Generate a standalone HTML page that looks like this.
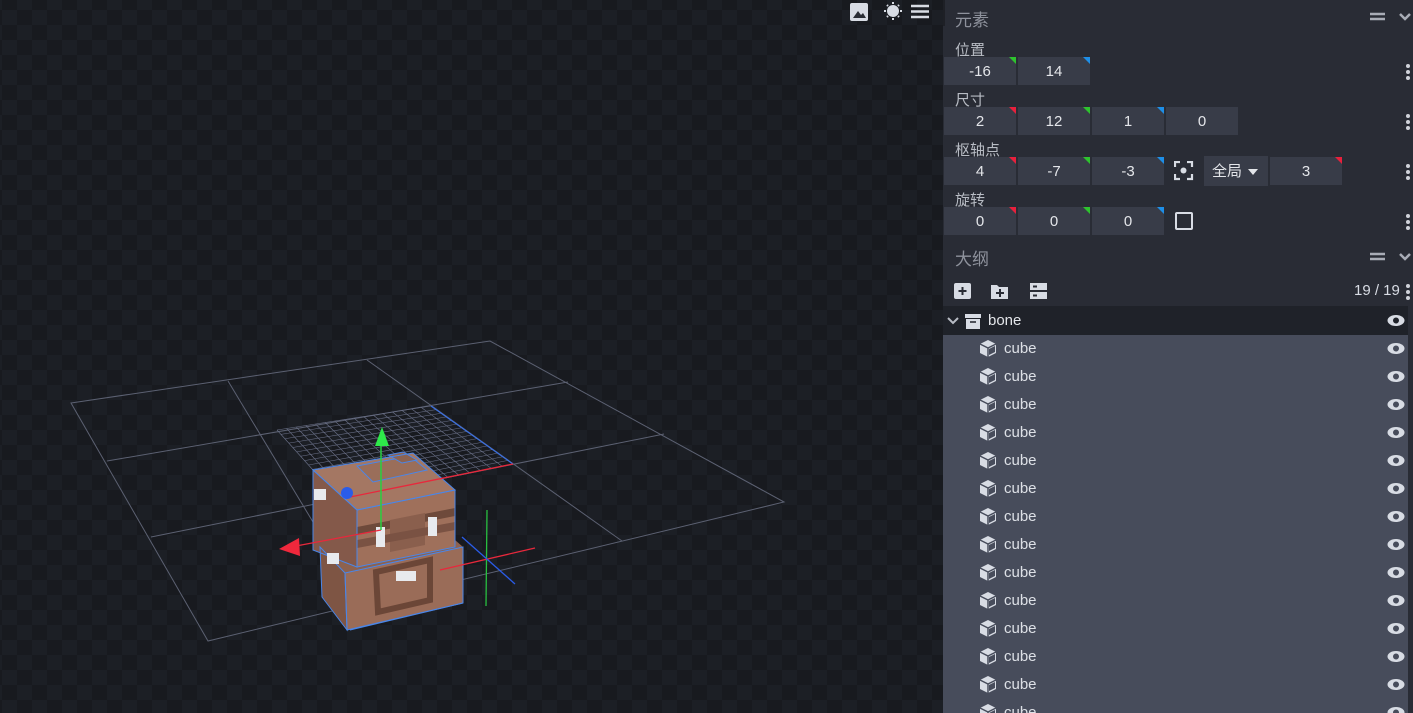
<!DOCTYPE html>
<html><head><meta charset="utf-8"><style>
*{margin:0;padding:0;box-sizing:border-box}
body{width:1413px;height:713px;overflow:hidden;background:#1b1d22;font-family:"Liberation Sans","Noto Sans CJK SC",sans-serif;position:relative}
#vp{position:absolute;left:0;top:0;width:943px;height:713px;
background-color:#181a1f;
background-image:linear-gradient(45deg,#1c1f25 25%,transparent 25%,transparent 75%,#1c1f25 75%),linear-gradient(45deg,#1c1f25 25%,transparent 25%,transparent 75%,#1c1f25 75%);
background-size:30px 30px;background-position:2px -5px,17px 10px}
#panel{position:absolute;left:943px;top:0;width:470px;height:713px;background:#292c35;color:#d0d3da;overflow:hidden}
.t{position:absolute;font-size:15px}
.h{position:absolute;left:12px;font-size:17px;color:#8e929c}
.lbl{position:absolute;left:12px;font-size:15px;color:#b8bcc4}
.f{position:absolute;height:28px;width:72px;background:#383c48;color:#e4e6ea;font-size:15px;text-align:center;line-height:30px}
.f.r::after,.f.g::after,.f.b::after{content:"";position:absolute;right:0;top:0;border-top:7px solid;border-left:7px solid transparent}
.f.r::after{border-top-color:#e8203c}.f.g::after{border-top-color:#2ec32e}.f.b::after{border-top-color:#1e8fe8}
.dots{position:absolute;right:3px;width:4px}
.dots i{display:block;width:4px;height:4px;border-radius:2px;background:#d0d3da;margin-bottom:2px}
.row{position:absolute;left:0;width:465px;height:28px;background:#474c5b;font-size:15px;color:#dde0e6}
.row span{position:absolute;left:61px;top:5px}
.row svg{position:absolute}
</style></head><body>
<div id="vp">
<svg width="943" height="713" style="position:absolute;left:0;top:0">
<g stroke="#5c6172" stroke-width="1" fill="none">
<polygon points="71,403 490,341 784,502 208,641"/>
<line x1="228" y1="381" x2="363" y2="605"/>
<line x1="367" y1="360" x2="622" y2="541"/>
<line x1="107" y1="461" x2="568" y2="382"/>
<line x1="151" y1="537" x2="664" y2="434"/>
</g>
<g stroke="#6a7088" stroke-width="0.6" fill="none" id="fg"></g>
<line x1="431" y1="406" x2="513" y2="464" stroke="#3a6fe0" stroke-width="1.2"/>
<polygon points="320,547 345,573 347,630 322,597" fill="#7e5544"/>
<polygon points="345,573 463,547 463,603 347,630" fill="#9a6c58"/>
<polygon points="376,572 430,560 430,600 378,612" fill="none" stroke="#6b4637" stroke-width="6"/>
<polygon points="320,547 438,525 463,547 345,573" fill="#8d624f"/>
<polygon points="313,470 357,510 357,567 313,550" fill="#84594a"/>
<polygon points="357,510 455,490 455,547 357,567" fill="#9f705b"/>
<polygon points="313,470 413,453 455,490 357,510" fill="#a47763"/>
<polygon points="357,527 455,508 455,516 357,535" fill="#6e4a3b"/>
<polygon points="390,520 425,513 425,545 390,552" fill="#8a5f4d"/>
<polygon points="357,540 455,522 455,530 357,548" fill="#7a5243"/>
<polygon points="357,466 410,456 427,470 373,482" fill="#9a6e5a" stroke="#4a86e8" stroke-width="1"/>
<polygon points="388,455 403,452 417,460 402,463" fill="#8c6351" stroke="#4a86e8" stroke-width="1"/>
<g fill="none" stroke="#4a86e8" stroke-width="1">
<polygon points="313,470 413,453 455,490 357,510"/>
<polygon points="357,510 455,490 455,547 357,567"/>
<polygon points="313,470 357,510 357,567 313,550"/>
<polygon points="320,547 345,573 347,630 322,597"/>
<polygon points="345,573 463,547 463,603 347,630"/>
<line x1="350" y1="630" x2="463" y2="603"/>
</g>
<rect x="376" y="527" width="9" height="20" fill="#e8eaee"/>
<rect x="428" y="517" width="9" height="19" fill="#e8eaee"/>
<rect x="396" y="571" width="20" height="10" fill="#e8eaee"/>
<rect x="314" y="489" width="12" height="11" fill="#e8eaee"/>
<rect x="327" y="553" width="12" height="11" fill="#e8eaee"/>
<line x1="350" y1="497" x2="513" y2="464" stroke="#e8283c" stroke-width="1.3"/>
<line x1="381" y1="530" x2="296" y2="546" stroke="#e8283c" stroke-width="1.3"/>
<polygon points="279,549 299,538 300,556" fill="#f0283c"/>
<line x1="381" y1="530" x2="381" y2="445" stroke="#28d040" stroke-width="1.5"/>
<polygon points="382,427 375,446 389,446" fill="#2ee84a"/>
<circle cx="347" cy="493" r="6" fill="#2a5ce8"/>
<line x1="487" y1="510" x2="486" y2="606" stroke="#28c040" stroke-width="1.3"/>
<line x1="440" y1="570" x2="535" y2="548" stroke="#e8283c" stroke-width="1.3"/>
<line x1="462" y1="537" x2="515" y2="584" stroke="#2a5ce8" stroke-width="1.3"/>
</svg>
<svg width="90" height="24" style="position:absolute;left:848px;top:2px">
<rect x="2" y="1" width="18" height="18" rx="2" fill="#d8dce4"/>
<polygon points="5,16 10,9 13,13 15,11 18,16" fill="#2a2d35"/>
<circle cx="45" cy="9" r="6" fill="#d8dce4"/>
<g stroke="#d8dce4" stroke-width="2"><line x1="45" y1="0" x2="45" y2="2"/><line x1="45" y1="16" x2="45" y2="18"/><line x1="36" y1="9" x2="38" y2="9"/><line x1="52" y1="9" x2="54" y2="9"/><line x1="39" y1="3" x2="40" y2="4"/><line x1="50" y1="14" x2="51" y2="15"/><line x1="51" y1="3" x2="50" y2="4"/><line x1="39" y1="15" x2="40" y2="14"/>
<line x1="63" y1="4" x2="81" y2="4" stroke-width="2.5"/><line x1="63" y1="9.5" x2="81" y2="9.5" stroke-width="2.5"/><line x1="63" y1="15" x2="81" y2="15" stroke-width="2.5"/></g>
</svg>
</div>
<div id="panel">
<div style="position:absolute;left:0;top:0;width:2px;height:26px;background:#1e2026"></div>
<div class="h" style="top:6px">元素</div>
<svg width="50" height="14" style="position:absolute;left:425px;top:10px"><g stroke="#a8acb6" stroke-width="2.5" fill="none"><line x1="2" y1="4" x2="17" y2="4"/><line x1="2" y1="9" x2="17" y2="9"/><polyline points="32,4 37,9 42,4"/></g></svg>
<div class="lbl" style="top:39px">位置</div>
<div class="f g" style="left:1px;top:57px">-16</div><div class="f b" style="left:75px;top:57px">14</div>
<div class="dots" style="top:64px"><i></i><i></i><i></i></div>
<div class="lbl" style="top:89px">尺寸</div>
<div class="f r" style="left:1px;top:107px">2</div><div class="f g" style="left:75px;top:107px">12</div><div class="f b" style="left:149px;top:107px">1</div><div class="f" style="left:223px;top:107px">0</div>
<div class="dots" style="top:114px"><i></i><i></i><i></i></div>
<div class="lbl" style="top:139px">枢轴点</div>
<div class="f r" style="left:1px;top:157px">4</div><div class="f g" style="left:75px;top:157px">-7</div><div class="f b" style="left:149px;top:157px">-3</div>
<svg width="20" height="20" style="position:absolute;left:231px;top:161px"><g stroke="#d8dce4" stroke-width="2.2" fill="none"><polyline points="1,6 1,1 6,1"/><polyline points="13,1 18,1 18,6"/><polyline points="18,13 18,18 13,18"/><polyline points="6,18 1,18 1,13"/></g><circle cx="9.5" cy="9.5" r="3" fill="#d8dce4"/></svg>
<div class="f" style="left:261px;top:156px;width:64px;height:30px;line-height:31px;text-align:left;padding-left:8px">全局<span style="position:absolute;left:44px;top:13px;border-top:6px solid #e4e6ea;border-left:5px solid transparent;border-right:5px solid transparent"></span></div>
<div class="f r" style="left:327px;top:157px">3</div>
<div class="dots" style="top:164px"><i></i><i></i><i></i></div>
<div class="lbl" style="top:189px">旋转</div>
<div class="f r" style="left:1px;top:207px">0</div><div class="f g" style="left:75px;top:207px">0</div><div class="f b" style="left:149px;top:207px">0</div>
<div style="position:absolute;left:232px;top:212px;width:18px;height:18px;border:2.5px solid #d8dce4;border-radius:2px"></div>
<div class="dots" style="top:214px"><i></i><i></i><i></i></div>
<div class="h" style="top:245px">大纲</div>
<svg width="50" height="14" style="position:absolute;left:425px;top:250px"><g stroke="#a8acb6" stroke-width="2.5" fill="none"><line x1="2" y1="4" x2="17" y2="4"/><line x1="2" y1="9" x2="17" y2="9"/><polyline points="32,4 37,9 42,4"/></g></svg>
<svg width="110" height="20" style="position:absolute;left:10px;top:282px">
<rect x="1" y="1" width="17" height="16" rx="2" fill="#d8dce4"/><g stroke="#292c35" stroke-width="2"><line x1="9.5" y1="5" x2="9.5" y2="13"/><line x1="5.5" y1="9" x2="13.5" y2="9"/></g>
<path d="M38 3 h6 l2 2 h9 v12 h-17z" fill="#d8dce4"/><g stroke="#292c35" stroke-width="2"><line x1="47" y1="7" x2="47" y2="15"/><line x1="43" y1="11" x2="51" y2="11"/></g>
<rect x="77" y="1" width="17" height="7" fill="#d8dce4"/><rect x="77" y="10" width="17" height="7" fill="#d8dce4"/><g stroke="#292c35" stroke-width="2"><line x1="80" y1="4.5" x2="84" y2="4.5"/><line x1="80" y1="13.5" x2="84" y2="13.5"/></g></svg>
<div class="t" style="left:411px;top:282px;font-size:15px;color:#d8dce4">19 / 19</div>
<div class="dots" style="top:284px"><i></i><i></i><i></i></div>
<div style="position:absolute;left:0;top:306px;width:465px;height:29px;background:#1f2229"></div>
<svg width="40" height="20" style="position:absolute;left:3px;top:312px"><polyline points="2,6 7,11 12,6" stroke="#b8bcc4" stroke-width="2" fill="none"/><rect x="19" y="2" width="16" height="4" fill="#d8dce4"/><rect x="20" y="7" width="14" height="10" fill="#d8dce4"/><line x1="24" y1="10" x2="30" y2="10" stroke="#1f2229" stroke-width="1.5"/></svg>
<div class="t" style="left:45px;top:312px;color:#e4e6ea">bone</div>
<svg width="20" height="14" style="position:absolute;left:444px;top:314px"><ellipse cx="9" cy="6.5" rx="8.5" ry="5.5" fill="#d8dce4"/><circle cx="9" cy="6.5" r="3" fill="#1f2229"/></svg>
<div style="position:absolute;left:465px;top:306px;width:5px;height:407px;background:#292c35"></div>
<div id="rows"></div>
</div>
<script>
var h='';for(var i=0;i<14;i++){var y=335+i*28;h+='<div class="row" style="top:'+y+'px"><svg width="20" height="20" style="left:36px;top:4px"><path d="M9 1 L17 5 L17 14 L9 18 L1 14 L1 5Z" fill="#d8dce4"/><path d="M9 9 L17 5 M9 9 L1 5 M9 9 L9 18" stroke="#474c5b" stroke-width="1.5" fill="none"/><path d="M10 10 L16 7 L16 13 L10 16Z" fill="#474c5b"/></svg><span>cube</span><svg width="20" height="14" style="left:444px;top:7px"><ellipse cx="9" cy="6.5" rx="8.5" ry="5.5" fill="#d8dce4"/><circle cx="9" cy="6.5" r="3" fill="#474c5b"/></svg></div>';}
document.getElementById('rows').innerHTML=h;
var g='',A=[277,430],B=[431,406],C=[513,464],D=[340,500];
function L(p,q,t){return[p[0]+(q[0]-p[0])*t,p[1]+(q[1]-p[1])*t]}
for(var k=0;k<=16;k++){var t=k/16,a=L(A,B,t),b=L(D,C,t),c=L(A,D,t),d=L(B,C,t);
g+='<line x1="'+a[0]+'" y1="'+a[1]+'" x2="'+b[0]+'" y2="'+b[1]+'"/><line x1="'+c[0]+'" y1="'+c[1]+'" x2="'+d[0]+'" y2="'+d[1]+'"/>';}
document.getElementById('fg').innerHTML=g;
</script>
</body></html>
